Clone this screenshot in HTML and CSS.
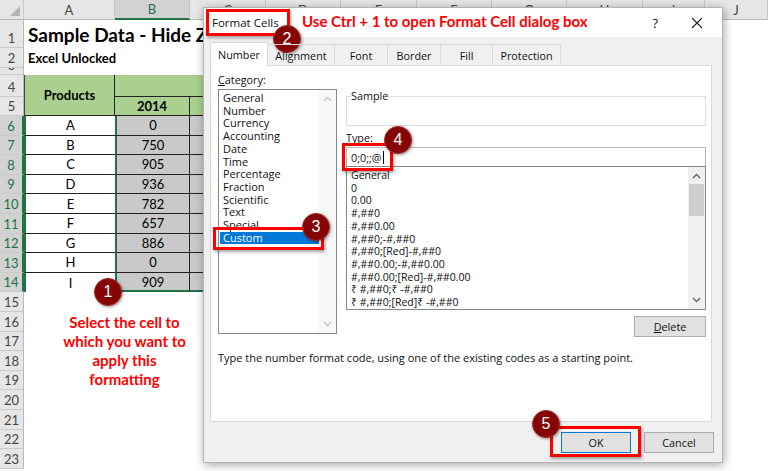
FILE: index.html
```html
<!DOCTYPE html>
<html lang="en">
<head>
  <meta charset="UTF-8" />
  <title>Hide Zero Values - Format Cells</title>
  <link rel="stylesheet" href="styles.css">
</head>
<body>
  <div class="sheet">
    <div class="ch corner"><svg width="10" height="10" viewBox="0 0 10 10"><path d="M10 0 L10 10 L0 10 Z" fill="#b5b5b5"/></svg></div>
    <div class="ch">A</div>
    <div class="ch sel">B</div>
    <div class="ch">C</div>
    <div class="ch">D</div>
    <div class="ch">E</div>
    <div class="ch">F</div>
    <div class="ch">G</div>
    <div class="ch">H</div>
    <div class="ch">I</div>
    <div class="ch">J</div>

    <div class="rh">1</div>
    <div class="cell title">Sample Data - Hide Zero Values in Excel</div>
    <div class="rh">2</div>
    <div class="cell sub">Excel Unlocked</div>
    <div class="rh">3</div>
    <div class="cell fill"></div>
    <div class="rh">4</div>
    <div class="cell hd prod">Products</div>
    <div class="cell hd sales"></div>
    <div class="cell rest7"></div>
    <div class="rh">5</div>
    <div class="cell hd yr">2014</div>
    <div class="cell hd yr"></div>
    <div class="cell rest7"></div>

    <div class="rh on">6</div><div class="cell ca">A</div><div class="cell cb">0</div><div class="cell cc"></div><div class="cell rest7"></div>
    <div class="rh on">7</div><div class="cell ca">B</div><div class="cell cb">750</div><div class="cell cc"></div><div class="cell rest7"></div>
    <div class="rh on">8</div><div class="cell ca">C</div><div class="cell cb">905</div><div class="cell cc"></div><div class="cell rest7"></div>
    <div class="rh on">9</div><div class="cell ca">D</div><div class="cell cb">936</div><div class="cell cc"></div><div class="cell rest7"></div>
    <div class="rh on">10</div><div class="cell ca">E</div><div class="cell cb">782</div><div class="cell cc"></div><div class="cell rest7"></div>
    <div class="rh on">11</div><div class="cell ca">F</div><div class="cell cb">657</div><div class="cell cc"></div><div class="cell rest7"></div>
    <div class="rh on">12</div><div class="cell ca">G</div><div class="cell cb">886</div><div class="cell cc"></div><div class="cell rest7"></div>
    <div class="rh on">13</div><div class="cell ca">H</div><div class="cell cb">0</div><div class="cell cc"></div><div class="cell rest7"></div>
    <div class="rh on">14</div><div class="cell ca last">I</div><div class="cell cb last">909</div><div class="cell cc last"></div><div class="cell rest7"></div>

    <div class="rh">15</div><div class="cell fill"></div>
    <div class="rh">16</div><div class="cell fill"></div>
    <div class="rh">17</div><div class="cell fill"></div>
    <div class="rh">18</div><div class="cell fill"></div>
    <div class="rh">19</div><div class="cell fill"></div>
    <div class="rh">20</div><div class="cell fill"></div>
    <div class="rh">21</div><div class="cell fill"></div>
    <div class="rh">22</div><div class="cell fill"></div>
    <div class="rh">23</div><div class="cell fill"></div>
  </div>

  <div class="dialog">
    <div class="dlg-title">
      <span class="dlg-name">Format Cells</span>
      <span class="dlg-help">?</span>
      <svg class="dlg-close" width="12" height="12" viewBox="0 0 12 12"><path d="M1 1 L11 11 M11 1 L1 11" stroke="#222" stroke-width="1.1" fill="none"/></svg>
    </div>
    <div class="dlg-body">
      <div class="tabs">
        <span class="tab active">Number</span>
        <span class="tab">Alignment</span>
        <span class="tab">Font</span>
        <span class="tab">Border</span>
        <span class="tab">Fill</span>
        <span class="tab">Protection</span>
      </div>
      <div class="panel">
        <div class="panel-top">
          <div class="cat-col">
            <div class="lbl"><u>C</u>ategory:</div>
            <div class="listbox cat-list">
              <div class="items">
                <div>General</div>
                <div>Number</div>
                <div>Currency</div>
                <div>Accounting</div>
                <div>Date</div>
                <div>Time</div>
                <div>Percentage</div>
                <div>Fraction</div>
                <div>Scientific</div>
                <div>Text</div>
                <div>Special</div>
                <div class="picked">Custom</div>
              </div>
              <div class="vscroll off">
                <svg width="9" height="6" viewBox="0 0 9 6"><path d="M1 5 L4.5 1.5 L8 5" stroke="#c2c2c2" stroke-width="1.3" fill="none"/></svg>
                <svg width="9" height="6" viewBox="0 0 9 6"><path d="M1 1 L4.5 4.5 L8 1" stroke="#c2c2c2" stroke-width="1.3" fill="none"/></svg>
              </div>
            </div>
          </div>
          <div class="fmt-col">
            <fieldset class="sample"><legend>Sample</legend></fieldset>
            <div class="lbl type-lbl"><u>T</u>ype:</div>
            <div class="type-input">0;0;;@<span class="caret"></span></div>
            <div class="listbox type-list">
              <div class="items">
                <div>General</div>
                <div>0</div>
                <div>0.00</div>
                <div>#,##0</div>
                <div>#,##0.00</div>
                <div>#,##0;-#,##0</div>
                <div>#,##0;[Red]-#,##0</div>
                <div>#,##0.00;-#,##0.00</div>
                <div>#,##0.00;[Red]-#,##0.00</div>
                <div>₹ #,##0;₹ -#,##0</div>
                <div>₹ #,##0;[Red]₹ -#,##0</div>
              </div>
              <div class="vscroll">
                <svg width="9" height="6" viewBox="0 0 9 6"><path d="M1 5 L4.5 1.5 L8 5" stroke="#606060" stroke-width="1.3" fill="none"/></svg>
                <div class="thumb"></div>
                <svg class="down" width="9" height="6" viewBox="0 0 9 6"><path d="M1 1 L4.5 4.5 L8 1" stroke="#606060" stroke-width="1.3" fill="none"/></svg>
              </div>
            </div>
            <div class="del-row"><button class="btn del"><u>D</u>elete</button></div>
          </div>
        </div>
        <p class="help">Type the number format code, using one of the existing codes as a starting point.</p>
      </div>
      <div class="dlg-buttons">
        <button class="btn ok">OK</button>
        <button class="btn">Cancel</button>
      </div>
    </div>
  </div>

  <!-- tutorial callouts -->
  <div class="redbox rb-title"></div>
  <div class="redbox rb-custom"></div>
  <div class="redbox rb-type"></div>
  <div class="redbox rb-ok"></div>

  <div class="note note-top">Use Ctrl + 1 to open Format Cell dialog box</div>
  <div class="note note-left">Select the cell to<br>which you want to<br>apply this<br>formatting</div>

  <div class="step s1">1</div>
  <div class="step s2">2</div>
  <div class="step s3">3</div>
  <div class="step s4">4</div>
  <div class="step s5">5</div>
</body>
</html>
```

FILE: styles.css
```css
* {
  box-sizing: border-box;
}

body {
  margin: 0;
  width: 768px;
  height: 471px;
  overflow: hidden;
  position: relative;
  background: white;
  font-family: Lato, "Liberation Sans", sans-serif;
  color: #000;
}

/* ---------- spreadsheet ---------- */

.sheet {
  display: grid;
  grid-template-columns: 24px 91px 75px 76px 75px 76px 75px 75px 76px 62px 1fr;
  grid-template-rows: 20px 28px 20px 7px 22px 19px repeat(18, 19.6px);
}

.ch {
  background: #e6e6e6;
  border-right: 1px solid #c9c9c9;
  border-bottom: 1px solid #b8b8b8;
  color: #444;
  font-size: 13px;
  display: flex;
  align-items: center;
  justify-content: center;
}

.ch.corner {
  justify-content: flex-end;
  align-items: flex-end;
  padding: 0 3px 3px 0;
}

.ch.sel {
  background: #d2d2d2;
  color: #217346;
  border-bottom: 2px solid #217346;
}

.rh {
  background: #e6e6e6;
  border-bottom: 1px solid #cacaca;
  border-right: 1px solid #b8b8b8;
  color: #444;
  font-size: 13px;
  display: flex;
  align-items: flex-end;
  justify-content: center;
  padding-bottom: 1px;
  overflow: hidden;
}

.rh.on {
  background: #d2d2d2;
  color: #217346;
  border-right: 2px solid #217346;
}

.cell {
  font-size: 13px;
  display: flex;
  align-items: center;
  justify-content: center;
  overflow: hidden;
  white-space: nowrap;
}

.title {
  grid-column: 2 / -1;
  justify-content: flex-start;
  align-items: flex-end;
  padding: 0 0 2px 4px;
  font-size: 19px;
  font-weight: 700;
}

.sub {
  grid-column: 2 / -1;
  justify-content: flex-start;
  align-items: flex-end;
  padding: 0 0 2px 4px;
  font-weight: 700;
}

.fill {
  grid-column: 2 / -1;
}

.rest7 {
  grid-column: span 7;
}

.hd {
  background: #a9d08e;
  font-weight: 700;
}

.prod {
  grid-row: span 2;
  border-right: 1px solid #222;
  border-bottom: 1px solid #222;
  border-left: 1px solid #444;
}

.sales {
  grid-column: span 2;
  border-bottom: 1px solid #222;
}

.yr {
  border-right: 1px solid #222;
  border-bottom: 1px solid #222;
  align-items: flex-end;
  padding-bottom: 1px;
}

.ca {
  background: white;
  border-left: 2px solid #217346;
  border-bottom: 1px solid #222;
}

.cb {
  background: #c9c9c9;
  border-left: 2px solid #217346;
  border-right: 1px solid #222;
  border-bottom: 1px solid #222;
}

.cc {
  background: #c9c9c9;
  border-bottom: 1px solid #222;
}

.ca.last {
  border-bottom: none;
}

.cb.last,
.cc.last {
  border-bottom: 2px solid #217346;
}

/* ---------- format cells dialog ---------- */

.dialog {
  position: absolute;
  left: 203px;
  top: 7px;
  width: 520px;
  height: 456px;
  background: #f0f0f0;
  border: 1px solid #b4b4b4;
  box-shadow: 1px 2px 9px rgba(0, 0, 0, 0.35);
  font-family: "Open Sans", "Noto Sans", sans-serif;
  font-size: 10px;
  color: #111;
  display: flex;
  flex-direction: column;
}

.dlg-title {
  height: 29px;
  background: white;
  display: flex;
  align-items: center;
  padding-left: 8px;
  flex-shrink: 0;
}

.dlg-name {
  font-size: 11.5px;
}

.dlg-help {
  margin-left: auto;
  font-size: 13px;
  margin-right: 33px;
}

.dlg-close {
  margin-right: 19px;
}

.dlg-body {
  padding: 7px 10px 0 6px;
}

.tabs {
  display: flex;
  height: 21px;
  position: relative;
  z-index: 1;
}

.tab {
  border: 1px solid #d9d9d9;
  border-bottom: none;
  margin-right: -1px;
  display: flex;
  align-items: center;
  justify-content: center;
  font-size: 10.8px;
}

.tab:nth-child(1) { width: 58px; }
.tab:nth-child(2) { width: 68px; }
.tab:nth-child(3) { width: 54px; }
.tab:nth-child(4) { width: 54px; }
.tab:nth-child(5) { width: 53px; }
.tab:nth-child(6) { width: 69px; }

.tab.active {
  background: white;
  height: 24px;
  margin-top: -2px;
  border-color: #d9d9d9;
}

.panel {
  background: white;
  border: 1px solid #d9d9d9;
  height: 357px;
  padding: 7px 5px 0 7px;
}

.panel-top {
  display: flex;
  gap: 9px;
}

.cat-col {
  width: 119px;
}

.fmt-col {
  flex: 1;
}

.lbl {
  height: 14px;
  line-height: 14px;
  margin-bottom: 2px;
  font-size: 10.8px;
}

.listbox {
  border: 1px solid #828790;
  display: flex;
  background: white;
}

.listbox .items {
  flex: 1;
  font-size: 10.5px;
  line-height: 12.7px;
  white-space: nowrap;
  overflow: hidden;
}

.cat-list {
  height: 245px;
}

.cat-list .items {
  padding: 2px 0 0 1px;
  font-size: 11px;
}

.cat-list .items div {
  padding-left: 3px;
}

.cat-list .items .picked {
  background: #0078d7;
  color: white;
}

.vscroll {
  width: 17px;
  background: #f0f0f0;
  display: flex;
  flex-direction: column;
  align-items: center;
  padding: 6px 0 6px;
}

.vscroll.off {
  background: #f7f7f7;
  justify-content: space-between;
}

.vscroll .thumb {
  width: 15px;
  height: 32px;
  background: #cdcdcd;
  margin-top: 5px;
}

.vscroll .down {
  margin-top: auto;
}

.sample {
  margin: 16px 0 0;
  padding: 0;
  height: 37px;
  border: 1px solid #dcdcdc;
}

.sample legend {
  padding: 0;
  margin-left: 4px;
  font-size: 10.8px;
  line-height: 14px;
}

.type-lbl {
  margin-top: 5px;
}

.type-input {
  height: 20px;
  border: 1px solid #b5b5b5;
  display: flex;
  align-items: center;
  padding-left: 4px;
  font-size: 10.8px;
}

.caret {
  width: 1px;
  height: 13px;
  background: #000;
  margin-left: 1px;
}

.type-list {
  height: 144px;
  margin-top: -1px;
}

.type-list .items {
  padding: 2px 0 0 4px;
}

.del-row {
  display: flex;
  justify-content: flex-end;
  margin-top: 6px;
}

.btn {
  font-family: "Open Sans", "Noto Sans", sans-serif;
  font-size: 10.8px;
  color: #111;
  background: #e1e1e1;
  border: 1px solid #adadad;
  height: 21px;
  width: 70px;
  padding: 0;
}

.btn.del {
  width: 72px;
}

.help {
  margin: 14px 0 0;
  font-size: 11px;
  line-height: 14px;
}

.dlg-buttons {
  display: flex;
  justify-content: flex-end;
  gap: 13px;
  margin: 10px -2px 0 0;
}

.btn.ok {
  border-color: #0078d7;
}

/* ---------- callouts ---------- */

.redbox {
  position: absolute;
  border: 3px solid #ff0000;
  box-shadow: 1px 2px 3px rgba(0, 0, 0, 0.35);
}

.rb-title { left: 206px; top: 9px; width: 84px; height: 27px; }
.rb-custom { left: 213px; top: 227px; width: 111px; height: 23px; }
.rb-type { left: 342px; top: 143px; width: 51px; height: 28px; }
.rb-ok { left: 550px; top: 426px; width: 91px; height: 31px; }

.note {
  position: absolute;
  color: #ff0000;
  font-weight: 700;
  font-size: 15px;
  white-space: nowrap;
}

.note-top {
  left: 302px;
  top: 12px;
  line-height: 19px;
}

.note-left {
  left: 49px;
  top: 313px;
  width: 151px;
  text-align: center;
  line-height: 19px;
}

.step {
  position: absolute;
  width: 28px;
  height: 28px;
  border-radius: 50%;
  background: #850505;
  border: 1px solid #a52a2a;
  box-shadow: 1px 1px 3px rgba(0, 0, 0, 0.4);
  color: white;
  font-family: "Liberation Sans", sans-serif;
  font-size: 16px;
  display: flex;
  align-items: center;
  justify-content: center;
}

.s1 { left: 94px; top: 278px; }
.s2 { left: 273px; top: 25px; }
.s3 { left: 302px; top: 213px; }
.s4 { left: 384px; top: 126px; }
.s5 { left: 532px; top: 410px; }
```
